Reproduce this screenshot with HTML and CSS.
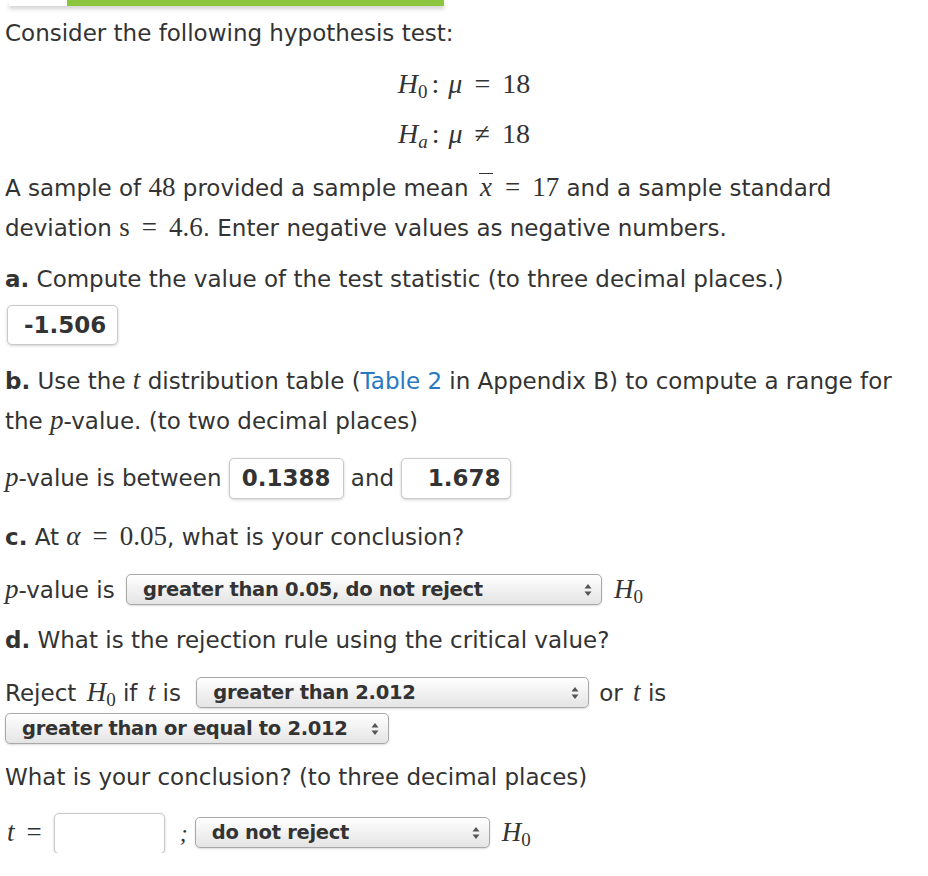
FILE: index.html
```html
<!DOCTYPE html>
<html lang="en">
<head>
  <meta charset="UTF-8">
  <title>Hypothesis Test</title>
  <link rel="stylesheet" href="styles.css">
</head>
<body>
  <div class="topbar"><span class="tab"></span><span class="progress"></span></div>

  <p class="first">Consider the following hypothesis test:</p>

  <p class="hyp"><i class="m">H</i><sub class="m">0</sub><span class="m colon">:</span><i class="m">μ</i><span class="m op">=</span><span class="m">18</span></p>
  <p class="hyp tight"><i class="m">H</i><sub class="m"><i>a</i></sub><span class="m colon">:</span><i class="m">μ</i><span class="m op">≠</span><span class="m">18</span></p>

  <p class="para">A sample of <span class="m">48</span> provided a sample mean <i class="m xbar">x</i><span class="m op">=</span><span class="m">17</span> and a sample standard deviation <span class="m">s</span><span class="m op">=</span><span class="m">4.6</span>. Enter negative values as negative numbers.</p>

  <p class="gap-a"><b>a.</b> Compute the value of the test statistic (to three decimal places.)</p>
  <div class="answer"><span class="box first-box">-1.506</span></div>

  <p class="gap-b"><b>b.</b> Use the <i class="m">t</i> distribution table (<a href="#" class="link">Table 2</a> in Appendix B) to compute a range for the <i class="m">p</i>-value. (to two decimal places)</p>

  <p class="row gap-row"><i class="m">p</i>-value is between <span class="box">0.1388</span> and <span class="box right">1.678</span></p>

  <p class="gap-cq"><b>c.</b> At <i class="m">α</i><span class="m op">=</span><span class="m">0.05</span>, what is your conclusion?</p>

  <p class="row gap-c"><i class="m">p</i>-value is <span class="pick w-c"><span class="pick-text">greater than 0.05, do not reject</span><svg class="arrows" viewBox="0 0 8 14"><path d="M4 1 L7.5 5.5 H0.5 Z M4 13 L7.5 8.5 H0.5 Z"/></svg></span><i class="m after">H</i><sub class="m">0</sub></p>

  <p class="gap-d"><b>d.</b> What is the rejection rule using the critical value?</p>

  <p class="row gap-c">Reject <i class="m sp">H</i><sub class="m">0</sub> if <i class="m sp">t</i> is <span class="pick w-d"><span class="pick-text">greater than 2.012</span><svg class="arrows" viewBox="0 0 8 14"><path d="M4 1 L7.5 5.5 H0.5 Z M4 13 L7.5 8.5 H0.5 Z"/></svg></span>or <i class="m sp">t</i> is</p>
  <p class="row short"><span class="pick w-d2 flush"><span class="pick-text">greater than or equal to 2.012</span><svg class="arrows" viewBox="0 0 8 14"><path d="M4 1 L7.5 5.5 H0.5 Z M4 13 L7.5 8.5 H0.5 Z"/></svg></span></p>

  <p class="gap-w">What is your conclusion? (to three decimal places)</p>

  <p class="row gap-t"><i class="m tvar">t</i><span class="m op">=</span><span class="box empty"></span><i class="m semi">;</i><span class="pick w-t"><span class="pick-text">do not reject</span><svg class="arrows" viewBox="0 0 8 14"><path d="M4 1 L7.5 5.5 H0.5 Z M4 13 L7.5 8.5 H0.5 Z"/></svg></span><i class="m after">H</i><sub class="m">0</sub></p>
</body>
</html>
```

FILE: styles.css
```css
:root {
  --text: #333333;
  --green: #8cc63e;
  --link: #2a78c2;
  --border: #c9c9c9;
  --radius: 5px;
}
* {
  box-sizing: border-box;
}
body {
  margin: 0;
  padding: 0 5px;
  font-family: 'DejaVu Sans', Verdana, sans-serif;
  font-size: 23px;
  line-height: 40px;
  color: var(--text);
  background: #ffffff;
}
p {
  margin: 0;
}
.topbar {
  display: flex;
  height: 6px;
  width: 435px;
  margin-left: 4px;
  box-shadow: 0 3px 4px rgba(0, 0, 0, 0.18);
}
.tab {
  width: 58px;
  background: #ffffff;
}
.progress {
  flex: 1;
  background: var(--green);
}
.first {
  margin-top: 7px;
}
.hyp {
  text-align: center;
  margin-top: 12px;
  padding-left: 0;
}
.hyp.tight {
  margin-top: 10px;
}
.para {
  margin-top: 13px;
}
.gap-a {
  margin-top: 11px;
}
.gap-b {
  margin-top: 18px;
}
.gap-row {
  margin-top: 17px;
}
.gap-cq {
  margin-top: 19px;
}
.gap-c {
  margin-top: 13px;
}
.gap-d {
  margin-top: 10px;
}
.gap-w {
  margin-top: 12px;
}
.gap-t {
  margin-top: 16px;
}
.row {
  height: 40px;
  white-space: nowrap;
}
.row.short {
  height: 32px;
  line-height: 32px;
}

/* math */
.m {
  font-family: 'Liberation Serif', 'DejaVu Serif', serif;
  font-size: 27px;
  line-height: 1;
}
.hyp .m {
  font-size: 28px;
}
i.m {
  font-style: italic;
}
sub.m,
.hyp sub.m {
  font-size: 19px;
  vertical-align: -5px;
  line-height: 0;
  font-style: normal;
}
.sp {
  margin-left: 3px;
}
.colon {
  margin: 0 9px 0 4px;
}
.op {
  margin: 0 12px;
}
.hyp .op {
  margin: 0 12px;
}
.tvar {
  margin-left: 2px;
}
.xbar {
  display: inline-block;
  border-top: 1.5px solid var(--text);
  padding: 0 1px;
  margin-left: 3px;
}
.semi {
  margin: 0 7px 0 15px;
  font-size: 24px;
}
.after {
  margin-left: 12px;
}
.link {
  color: var(--link);
  text-decoration: none;
}

/* answer boxes */
.answer {
  margin-top: 4px;
  height: 40px;
}
.box {
  display: inline-block;
  vertical-align: middle;
  height: 41px;
  line-height: 39px;
  padding: 0 12px;
  border: 1px solid var(--border);
  border-radius: var(--radius);
  box-shadow: 0 1px 3px rgba(0, 0, 0, 0.18);
  font-weight: 700;
  font-size: 23px;
  background: #ffffff;
  margin-top: -3px;
}
.answer .box {
  margin: 0 0 0 2px;
  width: 111px;
  padding-left: 16px;
  height: 40px;
}
.box.right {
  width: 110px;
  text-align: right;
  padding-right: 10px;
}
.box.empty {
  width: 111px;
  margin-left: 0;
}

/* selects */
.pick {
  position: relative;
  display: inline-flex;
  vertical-align: middle;
  align-items: center;
  height: 31px;
  margin: -4px 0 0 4px;
  padding: 0 24px 0 16px;
  border: 1px solid #a8a8a8;
  border-radius: var(--radius);
  background: linear-gradient(#ffffff, #e4e4e4);
  box-shadow: 0 1px 2px rgba(0, 0, 0, 0.15);
  font-weight: 700;
  font-size: 19.5px;
  line-height: 1;
}
.pick-text {
  flex: 1;
  letter-spacing: -0.3px;
}
.arrows {
  position: absolute;
  right: 9px;
  top: 8px;
  width: 8px;
  height: 14px;
  fill: #555555;
}
.w-c {
  width: 476px;
}
.w-d {
  width: 393px;
  margin-left: 8px;
  margin-right: 10px;
}
.w-d2 {
  width: 384px;
}
.w-t {
  width: 295px;
  margin-left: 0;
}
.flush {
  margin-left: 0;
}
```
